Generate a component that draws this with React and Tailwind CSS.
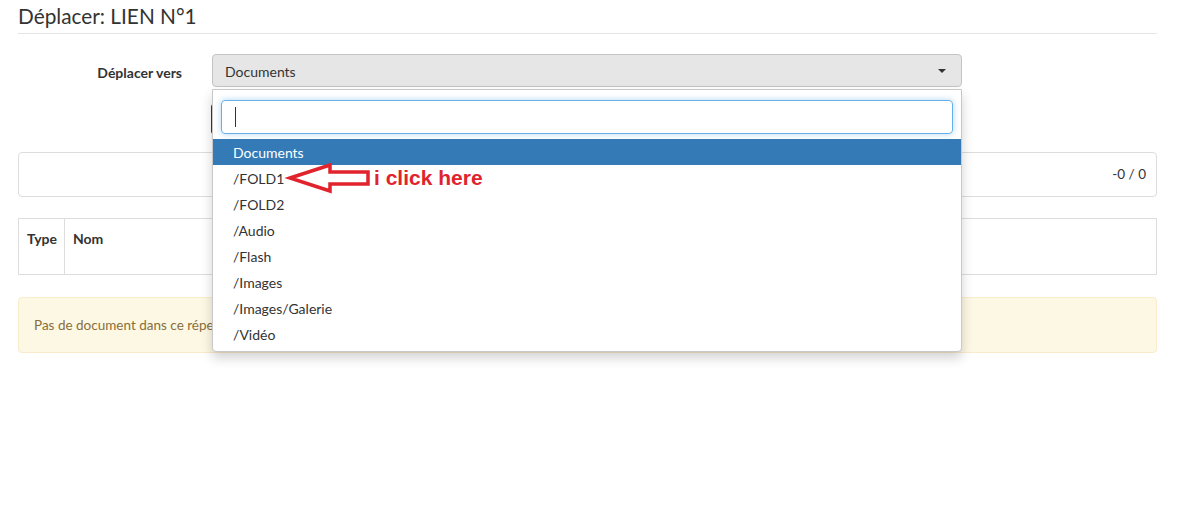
import React from "react";

const options = [
  "Documents",
  "/FOLD1",
  "/FOLD2",
  "/Audio",
  "/Flash",
  "/Images",
  "/Images/Galerie",
  "/Vidéo",
];

export default function App() {
  return (
    <div className="relative w-[1184px] h-[509px] bg-white font-['Lato','Open_Sans',sans-serif] text-[#333] overflow-hidden">
      <div className="ml-[18px] w-[1139px]">
        {/* titre */}
        <h3 className="h-[34px] pt-[3px] text-[20.8px] leading-[26px] border-b border-[#e5e5e5]">
          Déplacer: LIEN N°1
        </h3>

        {/* ligne du formulaire */}
        <div className="mt-[20px] flex items-center">
          <label className="w-[164px] text-right text-[14px] font-bold pt-[3px]">Déplacer vers</label>
          <div className="ml-[30px] w-[750px] h-[33px] flex items-center justify-between px-[12px] bg-[#e6e6e6] border border-[#c4c4c4] rounded-[4px] text-[14px]">
            <span className="pt-[2px]">Documents</span>
            <span className="w-0 h-0 border-l-[4px] border-r-[4px] border-t-[4px] border-l-transparent border-r-transparent border-t-[#333] mr-[3px]"></span>
          </div>
        </div>
        <div className="mt-[17px] ml-[193px] w-[80px] h-[30px] bg-[#3a3a3a] rounded-[3px]"></div>

        {/* pagination */}
        <div className="mt-[18px] h-[45px] border border-[#ddd] rounded-[4px] flex items-center justify-end pr-[10px] text-[13.5px]">
          -0 / 0
        </div>

        {/* tableau */}
        <div className="mt-[21px] h-[57px] border border-[#ddd] flex text-[14px] font-bold">
          <div className="w-[46px] border-r border-[#ddd] pl-[8px] pt-[9px]">Type</div>
          <div className="pl-[8px] pt-[9px]">Nom</div>
        </div>

        {/* alerte (le texte passe sous le menu ouvert) */}
        <div className="mt-[22px] h-[56px] border border-[#faebcc] bg-[#fcf8e3] rounded-[4px] flex items-center pl-[15px] text-[13.5px] text-[#8a6d3b]">
          <span className="w-[178px] overflow-hidden whitespace-nowrap">Pas de document dans ce répertoire</span>
        </div>
      </div>

      {/* menu déroulant ouvert */}
      <div className="absolute left-[212px] top-[89px] w-[750px] h-[263px] bg-white border border-[#c8c8c8] rounded-b-[4px] shadow-[0_6px_12px_rgba(0,0,0,0.18)]">
        <div className="mx-[8px] mt-[10px] h-[34px] border border-[#66afe9] rounded-[4px] shadow-[0_0_6px_rgba(102,175,233,0.5)] flex items-center pl-[13px]">
          <span className="w-[1px] h-[20px] bg-[#333]"></span>
        </div>
        <ul className="mt-[5px] text-[14px]">
          {options.map((o, i) => (
            <li
              key={o}
              className={
                i === 0
                  ? "h-[26px] pl-[20px] flex items-center bg-[#337ab7] text-white"
                  : "h-[26px] pl-[20px] flex items-center"
              }
            >
              {o}
            </li>
          ))}
        </ul>
      </div>

      {/* flèche rouge */}
      <svg className="absolute left-[284px] top-[160px]" width="90" height="36" viewBox="0 0 90 36">
        <polygon
          points="6,18 46,5 46,12 84,12 84,24 46,24 46,31"
          fill="white"
          stroke="#e0232c"
          strokeWidth="3.5"
          strokeLinejoin="miter"
        />
      </svg>
      <div className="absolute left-[374px] top-[165px] text-[21px] leading-[26px] font-bold text-[#e0232c] font-['Liberation_Sans',Arial,sans-serif]">
        i click here
      </div>
    </div>
  );
}
